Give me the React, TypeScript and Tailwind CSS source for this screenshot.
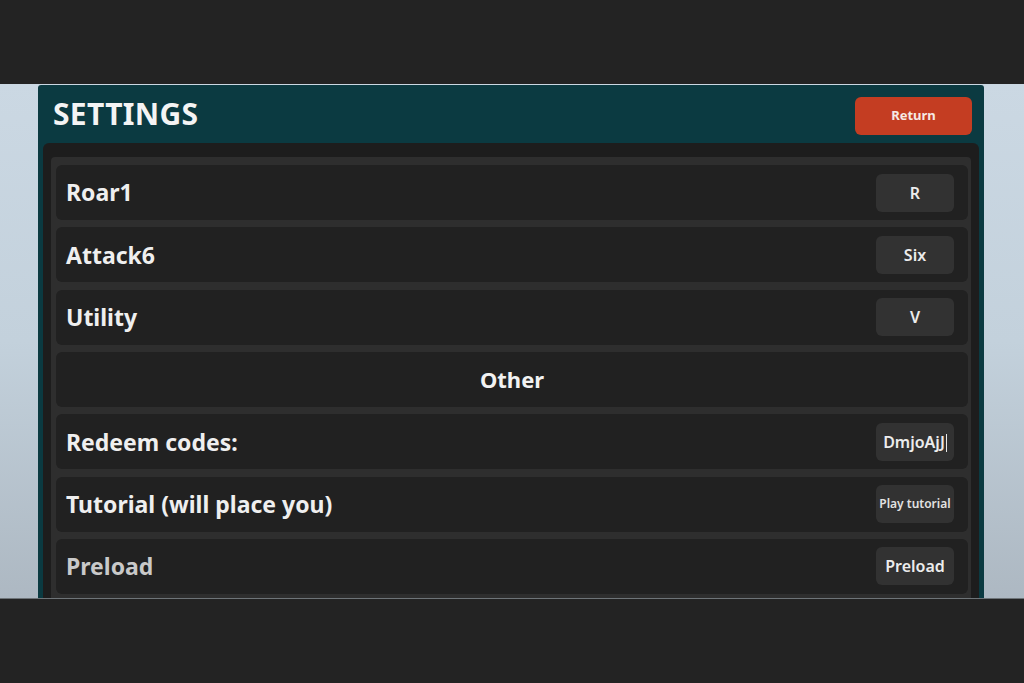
const font = { fontFamily: '"Noto Sans", "Open Sans", sans-serif' };

type Row = {
  label: string;
  key: string;
  dim?: boolean;
  small?: boolean;
  cursor?: boolean;
};

const rows: Row[] = [
  { label: 'Roar1', key: 'R' },
  { label: 'Attack6', key: 'Six' },
  { label: 'Utility', key: 'V' },
];

const other: Row[] = [
  { label: 'Redeem codes:', key: 'DmjoAjJ', cursor: true },
  { label: 'Tutorial (will place you)', key: 'Play tutorial', small: true },
  { label: 'Preload', key: 'Preload', dim: true },
];

function SettingRow({ row }: { row: Row }) {
  return (
    <div className="h-[55px] shrink-0 rounded-md bg-[#212121] flex items-center justify-between pl-[10px] pr-[14px]">
      <span
        className={`text-[23px] font-bold ${row.dim ? 'text-[#c9c9c9]' : 'text-[#efefef]'}`}
      >
        {row.label}
      </span>
      <div className="w-[78px] h-[38px] rounded-md bg-[#323232] flex items-center justify-center">
        <span
          className={`font-semibold ${row.small ? 'text-[12px] text-[#e2e2e2]' : 'text-[16px] text-[#ececec]'} ${row.dim ? 'text-[#d2d2d2]' : ''}`}
        >
          {row.key}
          {row.cursor && <span className="inline-block w-[1px] h-[18px] bg-[#e8e8e8] align-middle ml-[1px]"></span>}
        </span>
      </div>
    </div>
  );
}

export default function App() {
  return (
    <div className="w-[1024px] h-[683px] bg-[#232323] flex flex-col overflow-hidden" style={font}>
      <div className="h-[84px] shrink-0 bg-[#232323]"></div>

      <div className="h-[514px] shrink-0 overflow-hidden bg-gradient-to-b from-[#cbd8e3] via-[#c3d1dc] to-[#adb8c2] pt-[1px]">
        <div className="ml-[38px] w-[946px] h-[600px] bg-[#0b3a41] rounded-t-[3px] px-[5px]">
          {/* Header */}
          <div className="h-[58px] flex items-center justify-between pl-[10px] pr-[7px]">
            <h1 className="text-[30px] font-bold text-[#f4f4f4] tracking-[0.3px] leading-none">SETTINGS</h1>
            <button className="w-[117px] h-[38px] rounded-md bg-[#c43d22] text-[#f6e9e4] text-[13px] font-bold flex items-center justify-center mt-[3px]">
              Return
            </button>
          </div>

          {/* Content */}
          <div className="bg-[#1d1d1d] rounded-t-md pt-[14px] px-[8px] h-[560px]">
            <div className="bg-[#2e2e2e] rounded-t-sm pt-[8px] pl-[5px] pr-[3px] flex flex-col gap-[7.33px] h-[540px]">
              {rows.map((r) => (
                <SettingRow key={r.label} row={r} />
              ))}
              <div className="h-[55px] shrink-0 rounded-md bg-[#212121] flex items-center justify-center">
                <span className="text-[22px] font-bold text-[#f2f2f2]">Other</span>
              </div>
              {other.map((r) => (
                <SettingRow key={r.label} row={r} />
              ))}
            </div>
          </div>
        </div>
      </div>

      <div className="flex-1 bg-[#232323] border-t border-[#6e7478]"></div>
    </div>
  );
}
